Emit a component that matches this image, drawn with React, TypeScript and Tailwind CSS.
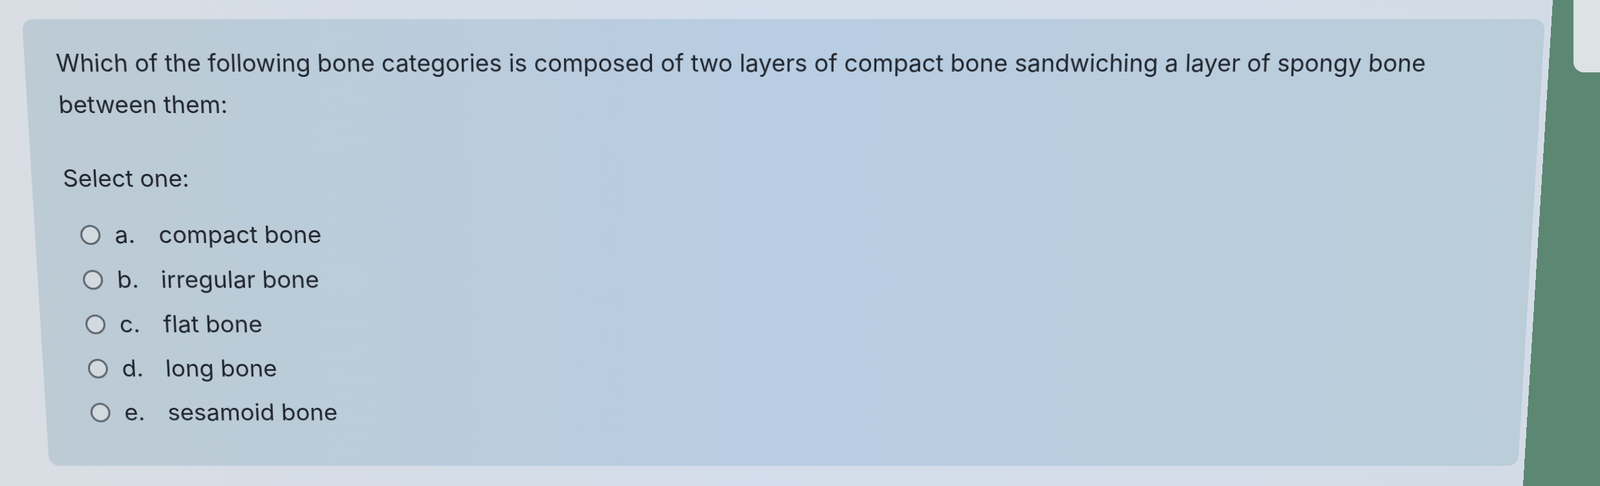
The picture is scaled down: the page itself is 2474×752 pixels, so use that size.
const options = [
  { letter: 'a.', text: 'compact bone' },
  { letter: 'b.', text: 'irregular bone' },
  { letter: 'c.', text: 'flat bone' },
  { letter: 'd.', text: 'long bone' },
  { letter: 'e.', text: 'sesamoid bone' },
];

function Radio() {
  return <span className="block h-[31px] w-[31px] shrink-0 rounded-full border-[3px] border-[#5c6570] bg-[#d2dae0]" />;
}

export default function App() {
  return (
    <div className="relative h-[752px] w-[2474px] overflow-hidden bg-[#5c8773] font-['Inter',sans-serif] text-[#20252d]">
      <div className="-ml-[60px] h-[820px] w-[2438px] origin-[1272px_376px] [transform:perspective(2000px)_rotateX(-6deg)] bg-gradient-to-r from-[#d9dee3] via-[#d3dcea] to-[#d3dce6] pl-[115px] pt-[34px]">
        <div className="h-[695px] w-[2313px] rounded-[16px] bg-gradient-to-r from-[#bccbd4] via-[#b9cde3] to-[#bacdd9] pl-[48px] pt-[34px]">
          <p className="w-[2180px] text-[36.7px] leading-[63px]">
            Which of the following bone categories is composed of two layers of compact bone sandwiching a layer of spongy bone between them:
          </p>
          <p className="mt-[50px] text-[36.7px] leading-[63px]">Select one:</p>
          <div className="mt-[21px] flex flex-col pl-[22px]">
            {options.map((o) => (
              <label key={o.letter} className="flex h-[70px] items-center text-[37px]">
                <Radio />
                <span className="ml-[22px] w-[68px]">{o.letter}</span>
                <span>{o.text}</span>
              </label>
            ))}
          </div>
        </div>
      </div>
      <div className="absolute right-0 top-0 h-[112px] w-[41px] rounded-bl-[16px] bg-[#dde2e5]" />
    </div>
  );
}
